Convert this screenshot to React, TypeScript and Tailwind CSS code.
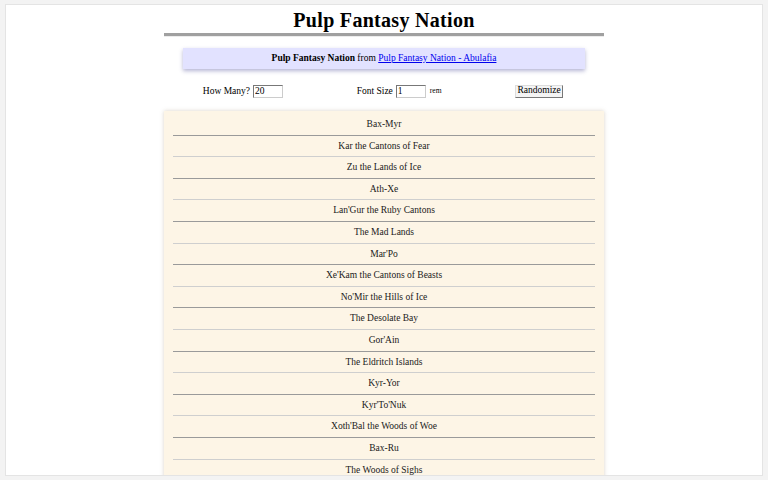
import { useState } from 'react';

const NATIONS = [
  'Bax-Myr',
  'Kar the Cantons of Fear',
  'Zu the Lands of Ice',
  'Ath-Xe',
  "Lan'Gur the Ruby Cantons",
  'The Mad Lands',
  "Mar'Po",
  "Xe'Kam the Cantons of Beasts",
  "No'Mir the Hills of Ice",
  'The Desolate Bay',
  "Gor'Ain",
  'The Eldritch Islands',
  'Kyr-Yor',
  "Kyr'To'Nuk",
  "Xoth'Bal the Woods of Woe",
  'Bax-Ru',
  'The Woods of Sighs',
  'Gur the Burning Wastes',
  "Zu'Nar",
  'The Howling Peaks'
];

export default function App () {
  const [count, setCount] = useState('20');
  const [size, setSize] = useState('1');

  return (
    <div className="h-screen w-full bg-[#f3f3f3] px-[5px] pt-[4px] pb-[4px] font-['Liberation_Serif',serif] text-black">
      <div className="h-full overflow-hidden border border-[#e4e4e4] bg-white">
        <div className="mx-auto w-[440px]">
          <h1 className="border-b-[3px] border-[#a0a0a0] pt-[2px] text-center text-[20px] font-bold leading-[26px] tracking-[0.3px] shadow-[0_1px_0_#ececec]">
            Pulp Fantasy Nation
          </h1>

          <div className="mx-[19px] mt-[12px] h-[21px] bg-[#e2e2ff] text-center text-[9.5px] leading-[21px] shadow-[0_2px_4px_rgba(90,90,160,0.45)]">
            <b>Pulp Fantasy Nation</b> from{' '}
            <a href="#" className="text-[#0000ee] underline">Pulp Fantasy Nation - Abulafia</a>
          </div>

          <div className="mt-[15px] flex h-[14px] items-center justify-around px-[2px] text-[9.5px]">
            <label className="flex items-center gap-[3px]">
              How Many?
              <input
                value={count}
                onChange={e => setCount(e.target.value)}
                className="h-[13px] w-[30px] border border-t-[#777] border-l-[#777] border-r-[#ccc] border-b-[#ccc] px-[1px] text-[9.5px] leading-none outline-none"
              />
            </label>
            <label className="flex items-center gap-[3px]">
              Font Size
              <input
                value={size}
                onChange={e => setSize(e.target.value)}
                className="h-[13px] w-[30px] border border-t-[#777] border-l-[#777] border-r-[#ccc] border-b-[#ccc] px-[1px] text-[9.5px] leading-none outline-none"
              />
              <span className="ml-[1px] text-[7.5px]">rem</span>
            </label>
            <button className="mr-[2px] h-[13px] w-[48px] border border-t-[#ddd] border-l-[#ddd] border-r-[#777] border-b-[#777] bg-[#f4f4f4] text-[9.5px] leading-none">
              Randomize
            </button>
          </div>

          <div className="mt-[13px] bg-[#fdf5e6] px-[9px] pt-[3px] pb-[6px] shadow-[0_0_4px_rgba(150,130,100,0.35)]">
            {NATIONS.map((name, i) => (
              <div
                key={name}
                className={`border-b text-center text-[9.5px] leading-[20.6px] text-[#1a1a1a] ${i % 2 === 0 ? 'border-[#9a9a9a]' : 'border-[#cfcfcf]'}`}
              >
                {name}
              </div>
            ))}
          </div>
        </div>
      </div>
    </div>
  );
}
